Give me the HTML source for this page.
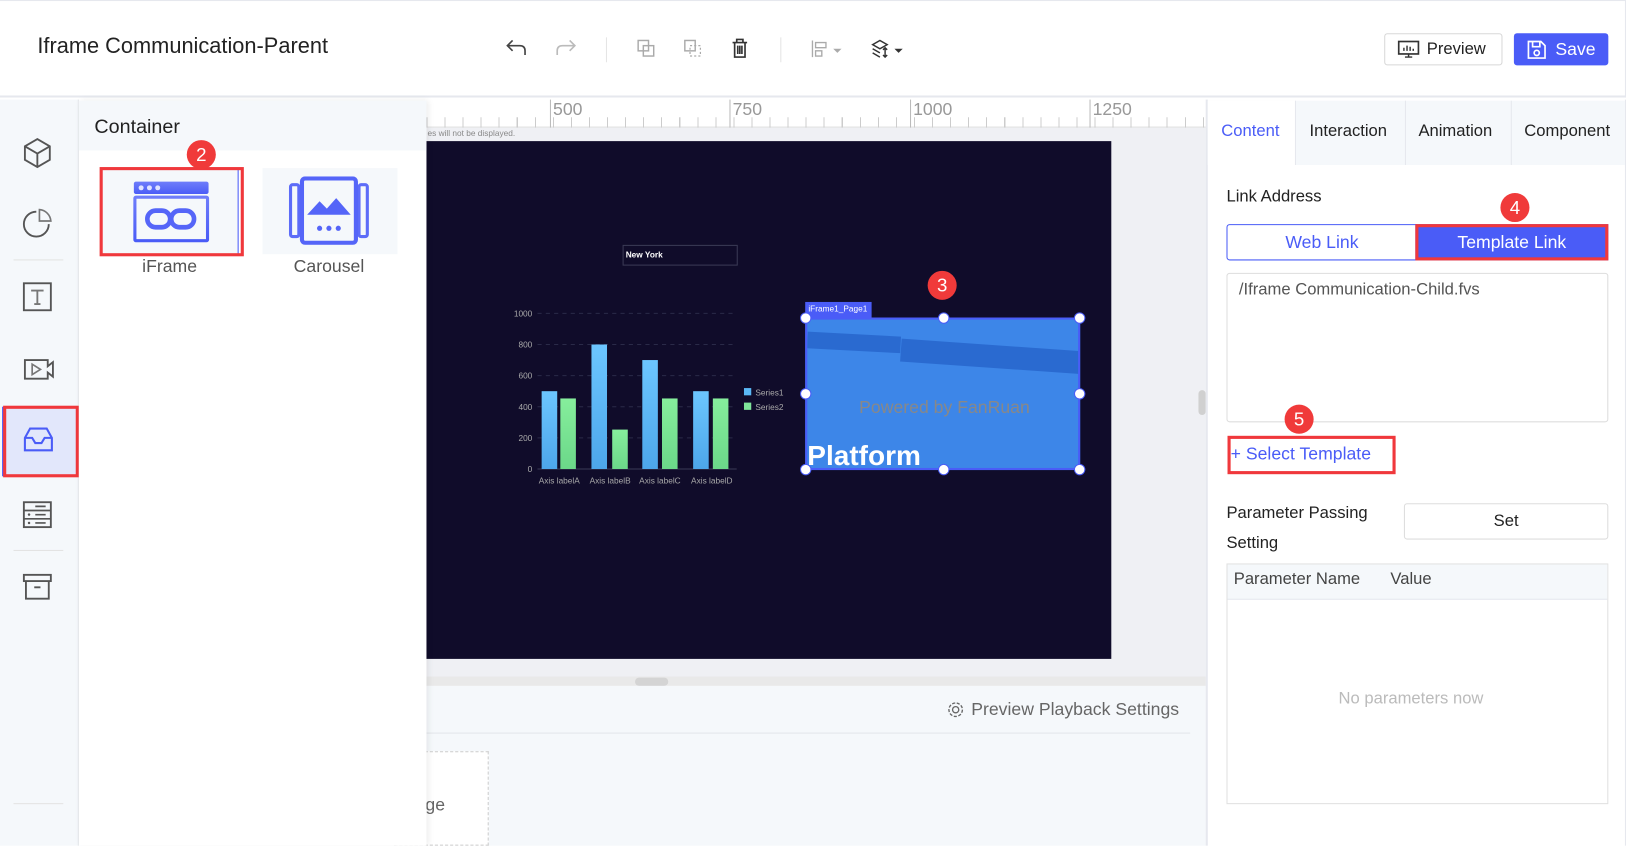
<!DOCTYPE html>
<html><head><meta charset="utf-8"><style>
*{box-sizing:border-box;margin:0;padding:0}
html,body{width:1627px;height:815px;overflow:hidden;background:#fff}
#w{position:absolute;left:0;top:0;width:1568px;height:786px;transform:scale(1.03763);transform-origin:0 0;font-family:"Liberation Sans",sans-serif;color:#222}
.a{position:absolute}
.badge{position:absolute;width:28px;height:28px;border-radius:50%;background:#f03a3a;color:#fff;font-size:18px;text-align:center;line-height:28px}
.red{position:absolute;border:3px solid #f0383c}
svg{position:absolute}
</style></head><body><div id="w">
<!-- header -->
<div class="a" style="left:0;top:0;width:1567px;height:94px;border-bottom:2px solid #e6e8ee;border-right:1px solid #e6e8ee;border-top:1px solid #e6e8ee"></div>
<div class="a" style="left:36px;top:33px;font-size:21px;color:#222">Iframe Communication-Parent</div>
<svg style="left:486px;top:35px" width="24" height="22" viewBox="0 0 24 22"><path d="M8 4 L3 9 L8 14 M3 9 H15 Q20 9 20 14 V18" fill="none" stroke="#444" stroke-width="1.6"/></svg>
<svg style="left:533px;top:35px" width="24" height="22" viewBox="0 0 24 22"><path d="M16 4 L21 9 L16 14 M21 9 H9 Q4 9 4 14 V18" fill="none" stroke="#bbb" stroke-width="1.6"/></svg>
<div class="a" style="left:584px;top:36px;width:1px;height:24px;background:#e5e5e5"></div>
<svg style="left:613px;top:37px" width="20" height="20"><rect x="2" y="2" width="10" height="10" fill="none" stroke="#aaa" stroke-width="1.4"/><rect x="7" y="7" width="10" height="10" fill="none" stroke="#aaa" stroke-width="1.4"/></svg>
<svg style="left:658px;top:37px" width="20" height="20"><rect x="2" y="2" width="10" height="10" fill="none" stroke="#aaa" stroke-width="1.4"/><rect x="7" y="7" width="10" height="10" fill="none" stroke="#aaa" stroke-width="1.2" stroke-dasharray="2 2"/></svg>
<svg style="left:703px;top:36px" width="20" height="22"><path d="M3 5 H17 M7 5 V2 H13 V5 M5 5 V19 H15 V5 M8 8 V16 M10 8 V16 M12 8 V16" fill="none" stroke="#333" stroke-width="1.6"/></svg>
<div class="a" style="left:752px;top:36px;width:1px;height:24px;background:#e5e5e5"></div>
<svg style="left:780px;top:37px" width="36" height="20"><path d="M3 2 V18 M6 4 H16 V9 H6 Z M6 12 H12 V17 H6 Z" fill="none" stroke="#aaa" stroke-width="1.3"/><path d="M23 10 H31 L27 14 Z" fill="#aaa"/></svg>
<svg style="left:838px;top:36px" width="36" height="22"><path d="M3 7 L10 3 L17 7 L10 11 Z M3 11 L10 15 M3 15 L10 19 M15 10 V19 M13 12 L15 10 L17 12 M13 17 L15 19 L17 17" fill="none" stroke="#333" stroke-width="1.4"/><path d="M24 11 H32 L28 15 Z" fill="#333"/></svg>
<div class="a" style="left:1334px;top:32px;width:114px;height:31px;border:1px solid #d8d8d8;border-radius:3px;font-size:16px;line-height:29px;padding-left:40px">Preview</div>
<svg style="left:1346px;top:38px" width="24" height="20"><rect x="2" y="2" width="19" height="12" fill="none" stroke="#333" stroke-width="1.6"/><path d="M8 17 H15 M11.5 14 V17 M7 11 V8 M10 11 V6 M13 11 V7 M16 11 V9" stroke="#333" stroke-width="1.4"/></svg>
<div class="a" style="left:1459px;top:32px;width:91px;height:31px;background:#4a5cf7;border-radius:3px;color:#fff;font-size:17px;line-height:31px;padding-left:40px">Save</div>
<svg style="left:1470px;top:37px" width="22" height="22"><path d="M3 3 H15 L19 7 V19 H3 Z M7 3 V8 H14 V3" fill="none" stroke="#fff" stroke-width="1.6"/><circle cx="11" cy="14" r="2.5" fill="none" stroke="#fff" stroke-width="1.6"/></svg>

<!-- left sidebar -->
<div class="a" style="left:0;top:96px;width:76px;height:719px;background:#f5f8fb;border-right:1px solid #e3e6ea"></div>
<div class="a" style="left:13px;top:250px;width:48px;height:1px;background:#e3e3e3"></div>
<div class="a" style="left:13px;top:530px;width:48px;height:1px;background:#e3e3e3"></div>
<div class="a" style="left:13px;top:774px;width:48px;height:1px;background:#e3e3e3"></div>
<svg style="left:20px;top:131px" width="32" height="32"><path d="M16 3 L28 10 V23 L16 30 L4 23 V10 Z M4 10 L16 17 L28 10 M16 17 V30" fill="none" stroke="#555" stroke-width="1.8"/></svg>
<svg style="left:20px;top:199px" width="32" height="32"><path d="M27 17 A12 12 0 1 1 15 5" fill="none" stroke="#555" stroke-width="1.8"/><path d="M18 3 A12 12 0 0 1 29 14 H18 Z" fill="none" stroke="#777" stroke-width="1.6"/></svg>
<svg style="left:20px;top:270px" width="32" height="32"><rect x="3" y="3" width="26" height="26" fill="none" stroke="#555" stroke-width="1.8"/><path d="M10 10 H22 M16 10 V23 M13 23 H19" stroke="#777" stroke-width="1.8" fill="none"/></svg>
<svg style="left:20px;top:341px" width="34" height="30"><path d="M4 6 H26 V12 L31 8 V22 L26 18 V24 H4 Z" fill="none" stroke="#555" stroke-width="1.8"/><path d="M11 10 L19 15 L11 20 Z" fill="none" stroke="#777" stroke-width="1.6"/></svg>
<div class="a" style="left:2px;top:392px;width:72px;height:67px;background:#e2e7fb"></div>
<div class="a" style="left:2px;top:392px;width:2px;height:67px;background:#4a5cf7"></div>
<div class="red" style="left:3px;top:391px;width:73px;height:69px"></div>
<svg style="left:20px;top:410px" width="34" height="28"><path d="M9 3 H25 L30 12 V24 H4 V12 Z M4 12 H11 L14 17 H20 L23 12 H30" fill="none" stroke="#4a5cf7" stroke-width="2"/></svg>
<div class="badge" style="left:78px;top:414px">1</div>
<svg style="left:20px;top:481px" width="32" height="30"><rect x="3" y="3" width="26" height="24" fill="none" stroke="#555" stroke-width="1.8"/><path d="M3 11 H29 M3 19 H29 M14 7 H24 M14 15 H24 M14 23 H24" stroke="#555" stroke-width="1.6"/><circle cx="8" cy="15" r="1.2" fill="#555"/><circle cx="8" cy="23" r="1.2" fill="#555"/></svg>
<svg style="left:20px;top:551px" width="32" height="30"><rect x="3" y="3" width="26" height="6" fill="none" stroke="#555" stroke-width="1.8"/><path d="M5 9 V26 H27 V9 M13 15 H19" fill="none" stroke="#555" stroke-width="1.8"/></svg>

<!-- ruler and canvas -->
<div class="a" style="left:77px;top:96px;width:1085px;height:27px;background:#fff;border-bottom:1px solid #ddd"></div>
<div class="a" style="left:77px;top:123px;width:1085px;height:538px;background:#eff0f4"></div>
<div class="a" style="left:530px;top:96px;width:1px;height:27px;background:#bbb"></div><div class="a" style="left:533px;top:96px;font-size:17px;color:#999">500</div>
<div class="a" style="left:703px;top:96px;width:1px;height:27px;background:#bbb"></div><div class="a" style="left:706px;top:96px;font-size:17px;color:#999">750</div>
<div class="a" style="left:877px;top:96px;width:1px;height:27px;background:#bbb"></div><div class="a" style="left:880px;top:96px;font-size:17px;color:#999">1000</div>
<div class="a" style="left:1050px;top:96px;width:1px;height:27px;background:#bbb"></div><div class="a" style="left:1053px;top:96px;font-size:17px;color:#999">1250</div>
<div class="a" style="left:411px;top:113px;width:750px;height:10px;background:repeating-linear-gradient(90deg,#ccc 0 1px,transparent 1px 17.4px)"></div>
<div class="a" style="left:412px;top:124px;font-size:8px;color:#888">es will not be displayed.</div>
<div class="a" style="left:1155px;top:376px;width:7px;height:24px;border-radius:4px;background:#d0d0d0"></div>
<div class="a" style="left:300px;top:136px;width:771px;height:499px;background:#100c2a"></div>
<div class="a" style="left:600px;top:236px;width:111px;height:20px;border:1px solid #3a3a55;color:#fff;font-size:8px;font-weight:bold;padding:4px 2px">New York</div>
<!-- chart -->
<svg style="left:480px;top:290px" width="300" height="190">
<g font-family="Liberation Sans" font-size="8" fill="#aaa" text-anchor="end">
<text x="33" y="15">1000</text><text x="33" y="45">800</text><text x="33" y="75">600</text><text x="33" y="105">400</text><text x="33" y="135">200</text><text x="33" y="165">0</text></g>
<g stroke="#2a2a48" stroke-dasharray="4 4"><path d="M38 12 H230 M38 42 H230 M38 72 H230 M38 102 H230 M38 132 H230"/></g>
<path d="M38 162 H230" stroke="#3a3a55"/>
<defs><linearGradient id="b" x1="0" y1="0" x2="0" y2="1"><stop offset="0" stop-color="#6cc6ff"/><stop offset="1" stop-color="#4da6ea"/></linearGradient><linearGradient id="g" x1="0" y1="0" x2="0" y2="1"><stop offset="0" stop-color="#86ee9c"/><stop offset="1" stop-color="#6bd889"/></linearGradient></defs>
<rect x="42" y="87" width="15" height="75" fill="url(#b)"/><rect x="60" y="94" width="15" height="68" fill="url(#g)"/>
<rect x="90" y="42" width="15" height="120" fill="url(#b)"/><rect x="110" y="124" width="15" height="38" fill="url(#g)"/>
<rect x="139" y="57" width="15" height="105" fill="url(#b)"/><rect x="158" y="94" width="15" height="68" fill="url(#g)"/>
<rect x="188" y="87" width="15" height="75" fill="url(#b)"/><rect x="207" y="94" width="15" height="68" fill="url(#g)"/>
<g font-family="Liberation Sans" font-size="8" fill="#aaa" text-anchor="middle"><text x="59" y="176">Axis labelA</text><text x="108" y="176">Axis labelB</text><text x="156" y="176">Axis labelC</text><text x="206" y="176">Axis labelD</text></g>
<rect x="237" y="84" width="7" height="7" fill="#5ab8f5"/><text x="248" y="91" font-size="8" fill="#aaa" font-family="Liberation Sans">Series1</text>
<rect x="237" y="98" width="7" height="7" fill="#7fe59a"/><text x="248" y="105" font-size="8" fill="#aaa" font-family="Liberation Sans">Series2</text>
</svg>
<!-- iframe widget -->
<div class="a" style="left:776px;top:291px;width:64px;height:15px;background:#4a5cf7;color:#fff;font-size:8px;padding:2px 3px">iFrame1_Page1</div>
<div class="a" style="left:776px;top:306px;width:265px;height:147px;background:#3d86e8;border:2px solid #4a5cf7;overflow:hidden">
<div class="a" style="left:0;top:14px;width:90px;height:16px;background:#2a6ad0;transform:rotate(3deg)"></div>
<div class="a" style="left:90px;top:25px;width:190px;height:22px;background:#2a6ad0;transform:rotate(4deg)"></div>
<div class="a" style="left:50px;top:75px;font-size:17px;color:#888">Powered by FanRuan</div>
<div class="a" style="left:0px;top:116px;font-size:27px;color:#fff;font-weight:bold">Platform</div>
</div>
<div class="a" style="left:771px;top:301px;width:11px;height:11px;border-radius:50%;background:#fff;border:1px solid #4a5cf7"></div>
<div class="a" style="left:904px;top:301px;width:11px;height:11px;border-radius:50%;background:#fff;border:1px solid #4a5cf7"></div>
<div class="a" style="left:1035px;top:301px;width:11px;height:11px;border-radius:50%;background:#fff;border:1px solid #4a5cf7"></div>
<div class="a" style="left:771px;top:374px;width:11px;height:11px;border-radius:50%;background:#fff;border:1px solid #4a5cf7"></div>
<div class="a" style="left:1035px;top:374px;width:11px;height:11px;border-radius:50%;background:#fff;border:1px solid #4a5cf7"></div>
<div class="a" style="left:771px;top:447px;width:11px;height:11px;border-radius:50%;background:#fff;border:1px solid #4a5cf7"></div>
<div class="a" style="left:904px;top:447px;width:11px;height:11px;border-radius:50%;background:#fff;border:1px solid #4a5cf7"></div>
<div class="a" style="left:1035px;top:447px;width:11px;height:11px;border-radius:50%;background:#fff;border:1px solid #4a5cf7"></div>
<div class="badge" style="left:894px;top:261px">3</div>
<!-- scrollbar & bottom -->
<div class="a" style="left:77px;top:652px;width:1085px;height:9px;background:#e9e9e9"></div>
<div class="a" style="left:612px;top:653px;width:32px;height:8px;border-radius:4px;background:#d4d4d4"></div>
<div class="a" style="left:77px;top:661px;width:1085px;height:154px;background:#f5f8fb"></div>
<div class="a" style="left:77px;top:706px;width:1070px;height:1px;background:#e3e6ea"></div>
<svg style="left:912px;top:675px" width="18" height="18"><circle cx="9" cy="9" r="3" fill="none" stroke="#666" stroke-width="1.3"/><circle cx="9" cy="9" r="6.5" fill="none" stroke="#666" stroke-width="1.3" stroke-dasharray="3 1.5"/></svg>
<div class="a" style="left:936px;top:674px;font-size:17px;color:#666">Preview Playback Settings</div>
<div class="a" style="left:380px;top:724px;width:91px;height:91px;border:1px dashed #ccc;background:#fff"></div>
<div class="a" style="left:410px;top:766px;font-size:17px;color:#666">ge</div>

<!-- popup panel -->
<div class="a" style="left:76px;top:97px;width:335px;height:718px;background:#fff;box-shadow:2px 0 6px rgba(0,0,0,.08)"></div>
<div class="a" style="left:76px;top:97px;width:335px;height:48px;background:#f5f8fb"></div>
<div class="a" style="left:91px;top:112px;font-size:19px;color:#222">Container</div>
<div class="a" style="left:98px;top:162px;width:132px;height:84px;background:#f5f8fb;border-top:1px solid #4a5cf7;border-right:1px solid #4a5cf7"></div>
<div class="red" style="left:96px;top:161px;width:139px;height:86px"></div>
<svg style="left:127px;top:171px" width="76" height="66"><defs><linearGradient id="p" x1="0" y1="0" x2="0" y2="1"><stop offset="0" stop-color="#6f7dfa"/><stop offset="1" stop-color="#4a5cf7"/></linearGradient></defs>
<rect x="2" y="4" width="72" height="12" rx="2" fill="url(#p)"/><circle cx="9" cy="10" r="2.4" fill="#dfe3ff"/><circle cx="17" cy="10" r="2.4" fill="#dfe3ff"/><circle cx="25" cy="10" r="2.4" fill="#dfe3ff"/>
<rect x="3" y="19" width="70" height="42" rx="1" fill="none" stroke="url(#p)" stroke-width="3"/>
<rect x="15" y="32" width="22" height="16" rx="8" fill="none" stroke="#5565f8" stroke-width="4.5"/><rect x="38" y="32" width="22" height="16" rx="8" fill="none" stroke="#5565f8" stroke-width="4.5"/></svg>
<div class="a" style="left:137px;top:247px;font-size:17px;color:#555">iFrame</div>
<div class="badge" style="left:180px;top:135px">2</div>
<div class="a" style="left:253px;top:162px;width:130px;height:83px;background:#f5f8fb"></div>
<svg style="left:277px;top:170px" width="84" height="66"><rect x="3" y="8" width="8" height="50" rx="2" fill="none" stroke="#5d6cf8" stroke-width="3"/><rect x="69" y="8" width="8" height="50" rx="2" fill="none" stroke="#5d6cf8" stroke-width="3"/><rect x="14" y="2" width="52" height="62" rx="3" fill="none" stroke="#5565f8" stroke-width="4"/><path d="M19 37 L31 24 L38 31 L47 21 L61 37 Z" fill="#5565f8"/><circle cx="31" cy="50" r="2.5" fill="#5565f8"/><circle cx="40" cy="50" r="2.5" fill="#5565f8"/><circle cx="49" cy="50" r="2.5" fill="#5565f8"/></svg>
<div class="a" style="left:283px;top:247px;font-size:17px;color:#555">Carousel</div>

<!-- right panel -->
<div class="a" style="left:1162px;top:96px;width:2px;height:719px;background:#e6e8ee"></div>
<div class="a" style="left:1566px;top:96px;width:1px;height:719px;background:#e6e8ee"></div>
<div class="a" style="left:1164px;top:97px;width:402px;height:62px;background:#f5f8fb"></div>
<div class="a" style="left:1164px;top:97px;width:85px;height:62px;background:#fff;border-right:1px solid #e6e8ee"></div>
<div class="a" style="left:1354px;top:97px;width:1px;height:62px;background:#e6e8ee"></div>
<div class="a" style="left:1456px;top:97px;width:1px;height:62px;background:#e6e8ee"></div>
<div class="a" style="left:1177px;top:118px;font-size:16px;color:#4a5cf7">Content</div>
<div class="a" style="left:1262px;top:118px;font-size:16px">Interaction</div>
<div class="a" style="left:1367px;top:118px;font-size:16px">Animation</div>
<div class="a" style="left:1469px;top:118px;font-size:16px">Component</div>
<div class="a" style="left:1182px;top:181px;font-size:16px">Link Address</div>
<div class="a" style="left:1182px;top:216px;width:184px;height:35px;border:1px solid #4a5cf7;border-radius:3px 0 0 3px;color:#4a5cf7;font-size:17px;text-align:center;line-height:33px">Web Link</div>
<div class="a" style="left:1364px;top:216px;width:186px;height:35px;background:#4a5cf7;color:#fff;font-size:17px;text-align:center;line-height:29px;border:3px solid #f0383c">Template Link</div>
<div class="badge" style="left:1446px;top:186px">4</div>
<div class="a" style="left:1182px;top:263px;width:368px;height:144px;border:1px solid #ddd;border-radius:3px;padding:7px 11px;font-size:16px;color:#555">/Iframe Communication-Child.fvs</div>
<div class="red" style="left:1183px;top:420px;width:162px;height:37px"></div>
<div class="a" style="left:1186px;top:428px;font-size:17px;color:#4a5cf7">+ Select Template</div>
<div class="badge" style="left:1238px;top:390px">5</div>
<div class="a" style="left:1182px;top:480px;font-size:16px;line-height:29px">Parameter Passing<br>Setting</div>
<div class="a" style="left:1353px;top:485px;width:197px;height:35px;border:1px solid #ddd;border-radius:3px;text-align:center;line-height:33px;font-size:16px">Set</div>
<div class="a" style="left:1182px;top:543px;width:368px;height:232px;border:1px solid #e0e0e0"></div>
<div class="a" style="left:1183px;top:544px;width:366px;height:34px;background:#f5f8fb;border-bottom:1px solid #e6e8ee"></div>
<div class="a" style="left:1189px;top:550px;font-size:16px;color:#444">Parameter Name</div>
<div class="a" style="left:1340px;top:550px;font-size:16px;color:#444">Value</div>
<div class="a" style="left:1290px;top:665px;font-size:16px;color:#bbb">No parameters now</div>
</div></body></html>
